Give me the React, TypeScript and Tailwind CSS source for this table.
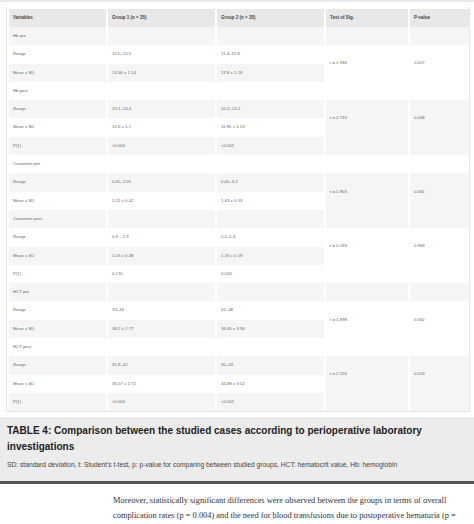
import React from 'react';

// one group of lab rows: section label + Range/Mean (+ P(1))
interface Group {
    label: string;
    range: [string, string];
    mean: [string, string];
    p1?: [string, string];
    t: string;
    pValue: string;
}

const groups: Group[] = [
    { label: 'Hb pre', range: ['10.5–15.5', '11.4–15.8'], mean: ['13.34 ± 1.14', '12.8 ± 1.19'], t: 't = 1.936', pValue: '0.057' },
    { label: 'Hb post', range: ['10.1–14.4', '10.3–14.2'], mean: ['12.6 ± 1.1', '11.85 ± 1.19'], p1: ['<0.001', '<0.001'], t: 't = 2.733', pValue: '0.008' },
    { label: 'Creatinine pre', range: ['0.45–2.05', '0.45–3.2'], mean: ['1.22 ± 0.42', '1.43 ± 0.53'], t: 't = 1.903', pValue: '0.061' },
    { label: 'Creatinine post', range: ['0.6 – 2.3', '0.5–1.4'], mean: ['1.16 ± 0.38', '1.16 ± 0.19'], p1: ['0.170', '0.003'], t: 't = 0.039', pValue: '0.969' },
    { label: 'HCT pre', range: ['33–44', '32–48'], mean: ['38.2 ± 2.77', '36.65 ± 3.96'], t: 't = 1.898', pValue: '0.062' },
    { label: 'HCT post', range: ['31.8–42', '30–43'], mean: ['36.57 ± 2.72', '34.89 ± 3.52'], p1: ['<0.001', '<0.001'], t: 't = 2.226', pValue: '0.029' },
];

const td = 'px-[4px] align-middle text-left font-normal';

export default function App() {
    let rowIdx = 0;
    const rows: React.ReactNode[] = [];
    const stripe = () => {
        rowIdx++;
        return rowIdx % 2 === 1 ? 'bg-[#f5f5f5]' : 'bg-white';
    };

    groups.forEach((g) => {
        // section label row
        const bgLabel = stripe();
        rows.push(
            <tr key={g.label} className="h-[18.3px]">
                <td className={`${td} ${bgLabel}`}>{g.label}</td>
                <td className={bgLabel} />
                <td className={bgLabel} />
                <td className={bgLabel} />
                <td className={bgLabel} />
            </tr>,
        );

        const bgRange = stripe();
        rows.push(
            <tr key={g.label + '-range'} className="h-[18.3px]">
                <td className={`${td} ${bgRange}`}>Range</td>
                <td className={`${td} ${bgRange}`}>{g.range[0]}</td>
                <td className={`${td} ${bgRange}`}>{g.range[1]}</td>
                <td rowSpan={2} className={`${td} ${bgRange}`}>{g.t}</td>
                <td rowSpan={2} className={`${td} ${bgRange}`}>{g.pValue}</td>
            </tr>,
        );

        const bgMean = stripe();
        rows.push(
            <tr key={g.label + '-mean'} className="h-[18.3px]">
                <td className={`${td} ${bgMean}`}>Mean ± SD</td>
                <td className={`${td} ${bgMean}`}>{g.mean[0]}</td>
                <td className={`${td} ${bgMean}`}>{g.mean[1]}</td>
            </tr>,
        );

        if (g.p1) {
            const bgP = stripe();
            rows.push(
                <tr key={g.label + '-p'} className="h-[18.3px]">
                    <td className={`${td} ${bgP}`}>P(1)</td>
                    <td className={`${td} ${bgP}`}>{g.p1[0]}</td>
                    <td className={`${td} ${bgP}`}>{g.p1[1]}</td>
                    <td className={bgP} />
                    <td className={bgP} />
                </tr>,
            );
        }
    });

    return (
        <div
            className="w-[474px] h-[524px] overflow-hidden bg-white"
            style={{ fontFamily: '"Liberation Sans", Arial, sans-serif' }}
        >
            {/* strip left from the block above */}
            <div className="h-[2px] bg-[#e9e9e9]" />

            {/* table wrapper */}
            <div className="mt-[5px] ml-[6px] w-[464px] h-[405px] border-l border-r border-b border-[#e6e6e6] pt-[2px]">
                <table className="table-fixed border-separate border-spacing-x-[2px] border-spacing-y-0 w-[460px] text-[4.3px] leading-none text-[#666]">
                    <colgroup>
                        <col className="w-[97px]" />
                        <col className="w-[107px]" />
                        <col className="w-[107px]" />
                        <col className="w-[82px]" />
                        <col className="w-[59px]" />
                    </colgroup>
                    <thead>
                        <tr className="h-[18px] text-[#444] text-[4.5px]">
                            <th className="px-[4px] text-left font-bold bg-[#e8e8e8]">Variables</th>
                            <th className="px-[4px] text-left font-bold bg-[#e8e8e8]">Group 1 (n = 35)</th>
                            <th className="px-[4px] text-left font-bold bg-[#e8e8e8]">Group 2 (n = 35)</th>
                            <th className="px-[4px] text-left font-bold bg-[#e8e8e8]">Test of Sig.</th>
                            <th className="px-[4px] text-left font-bold bg-[#e8e8e8]">P-value</th>
                        </tr>
                    </thead>
                    <tbody>{rows}</tbody>
                </table>
            </div>

            {/* caption */}
            <div className="mt-[5px] bg-[#ececec] px-[7px] pt-[6px] pb-[12px] border-b-[3px] border-[#555]">
                <h3 className="text-[10px] leading-[16px] font-bold text-[#222]">
                    TABLE 4: Comparison between the studied cases according to perioperative laboratory investigations
                </h3>
                <p className="mt-[6px] text-[6.7px] leading-[8px] text-[#444]">
                    SD: standard deviation, t: Student's t-test, p: p-value for comparing between studied groups, HCT: hematocrit value, Hb: hemoglobin
                </p>
            </div>

            {/* body text continues */}
            <p
                className="ml-[113px] mt-[9px] w-[345px] text-[8.4px] leading-[15px] text-[#333]"
                style={{ fontFamily: '"Liberation Serif", "Times New Roman", serif' }}
            >
                Moreover, statistically significant differences were observed between the groups in terms of overall
                complication rates (p = 0.004) and the need for blood transfusions due to postoperative hematuria (p =
                0.001).
            </p>
        </div>
    );
}
